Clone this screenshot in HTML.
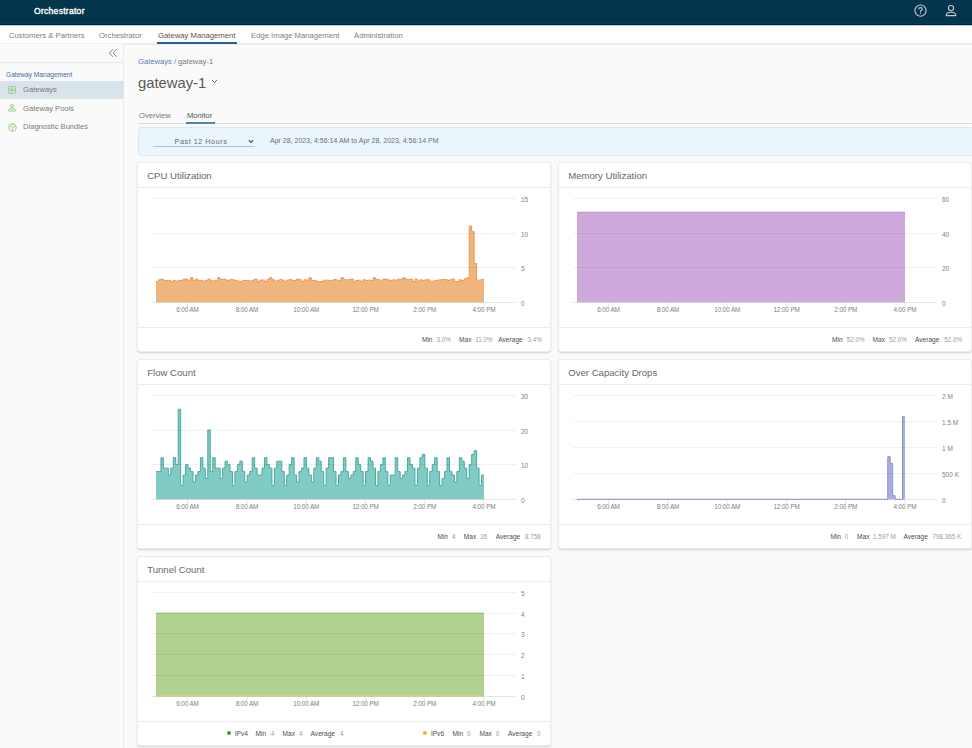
<!DOCTYPE html>
<html><head><meta charset="utf-8"><style>
*{margin:0;padding:0;box-sizing:border-box}
html,body{width:972px;height:748px;overflow:hidden;background:#fafafa;font-family:"Liberation Sans",sans-serif;color:#565656}
.hdr{position:absolute;left:0;top:0;width:972px;height:25px;background:#03364d;border-bottom:1px solid #01223a;box-shadow:inset 0 -1px 0 #0a3b52}
.brand{position:absolute;left:34px;top:6.2px;font-size:8.6px;font-weight:normal;color:#fff;letter-spacing:0.25px;-webkit-text-stroke:0.35px #fff}
.nav{position:absolute;left:0;top:25px;width:972px;height:19px;background:#fff}
.navb1{position:absolute;left:0;top:43px;width:972px;height:1px;background:#eeeeee}
.navb2{position:absolute;left:0;top:44px;width:972px;height:1px;background:#e9e9e9}
.nav span{position:absolute;top:5.8px;font-size:7.7px;color:#7e7e7e;white-space:nowrap}
.nav .act{color:#555}
.nav .ul{position:absolute;left:157px;top:17.3px;width:80px;height:1.8px;background:#1d62a5}
.side{position:absolute;left:0;top:44px;width:124px;height:704px;background:#fafafa;border-right:1px solid #ececec}
.side .sep{position:absolute;left:0;top:18px;width:123px;height:1px;background:#e6e6e6}
.side .lbl{position:absolute;left:6px;top:27px;font-size:6.6px;color:#3f6ea6;white-space:nowrap}
.side .sel{position:absolute;left:0;top:37px;width:124px;height:18px;background:#d8e3ea}
.side .it{position:absolute;left:23px;font-size:7.6px;color:#7a7a7a;white-space:nowrap}
.side svg{position:absolute}
.crumb{position:absolute;left:138px;top:57px;font-size:7.6px;color:#777;white-space:nowrap}
.crumb a{color:#5a7db0;text-decoration:none}
.title{position:absolute;left:138px;top:74.6px;font-size:14.8px;color:#585858;white-space:nowrap}
.tabs{position:absolute;left:138px;top:123px;width:834px;height:1px;background:#dcdcdc}
.tab{position:absolute;top:111px;font-size:7.6px;color:#767676;white-space:nowrap}
.tabul{position:absolute;left:186px;top:122px;width:29px;height:2px;background:#5283b0}
.fbar{position:absolute;left:138px;top:127px;width:836px;height:29px;background:#eaf6fc;border:1px solid #dae9f1;border-radius:3px}
.sel12{position:absolute;left:174.6px;top:137.3px;font-size:7.2px;letter-spacing:0.55px;color:#666;white-space:nowrap}
.selul{position:absolute;left:153px;top:146px;width:102px;height:1px;background:#b4c3cd}
.date{position:absolute;left:270px;top:137px;font-size:7px;color:#6e6e6e;white-space:nowrap}
.card{position:absolute;width:414px;height:190px;background:#fff;border:1px solid #ececec;border-radius:3px;box-shadow:0 1px 1.5px rgba(0,0,0,0.16)}
.card .ct{position:absolute;left:9.2px;top:6.9px;font-size:9.6px;color:#686868;white-space:nowrap}
.card .hd{position:absolute;left:0;top:24px;width:412px;height:1px;background:#ececec}
.card .fd{position:absolute;left:0;top:163.5px;width:412px;height:1px;background:#ececec}
.card svg.ch{position:absolute;left:0;top:0}
.yl{font-family:"Liberation Sans",sans-serif;font-size:6.5px;fill:#808080}
.xl{font-family:"Liberation Sans",sans-serif;font-size:6.4px;letter-spacing:-0.12px;fill:#808080}
.ft{position:absolute;left:0;top:0;width:411px;height:187px;white-space:nowrap}
.ft span{position:absolute;top:171.7px;line-height:9px;white-space:nowrap}
.fl{color:#4e4e4e;font-size:6.6px}
.fv{color:#9c9c9c;font-size:6.3px}
.dot{position:absolute;display:block;width:4px;height:4px;border-radius:50%}

</style></head><body>
<div class="hdr"><div class="brand">Orchestrator</div>
<svg style="position:absolute;left:913px;top:4px" width="15" height="14" viewBox="0 0 15 14"><circle cx="7.5" cy="6.6" r="5.6" fill="none" stroke="#c2cbd2" stroke-width="1.1"/><path d="M5.7 5.2 Q5.8 3.6 7.5 3.6 Q9.3 3.6 9.3 5.1 Q9.3 6.1 8.2 6.6 Q7.5 7 7.5 7.9" fill="none" stroke="#c2cbd2" stroke-width="1.1"/><circle cx="7.5" cy="9.3" r="0.7" fill="#c2cbd2"/></svg>
<svg style="position:absolute;left:944px;top:4px" width="14" height="14" viewBox="0 0 14 14"><circle cx="7" cy="4.1" r="2.6" fill="none" stroke="#c2cbd2" stroke-width="1.1"/><path d="M2.2 11.6 Q2.2 8.3 7 8.3 Q11.8 8.3 11.8 11.6 Z" fill="none" stroke="#c2cbd2" stroke-width="1.1" stroke-linejoin="round"/></svg>
</div>
<div class="nav">
<span style="left:9px">Customers &amp; Partners</span>
<span style="left:99px">Orchestrator</span>
<span class="act" style="left:158px">Gateway Management</span>
<span style="left:251px">Edge Image Management</span>
<span style="left:354px">Administration</span>
</div>
<div class="navb1"></div><div class="navb2"></div>
<div style="position:absolute;left:0;top:25px;width:972px;height:1px;background:#c3cbd0"></div>
<div class="nav-ul" style="position:absolute;left:157px;top:42.3px;width:80px;height:1.8px;background:#1d62a5"></div>
<div class="side">
<svg style="left:108px;top:4px" width="10" height="10" viewBox="0 0 10 10"><path d="M5 1.2 L1.4 5 L5 8.8 M8.8 1.2 L5.2 5 L8.8 8.8" fill="none" stroke="#6a6a6a" stroke-width="0.85"/></svg>
<div class="sep"></div>
<div class="lbl">Gateway Management</div>
<div class="sel"></div>
<svg style="left:8px;top:42px" width="8" height="8" viewBox="0 0 8 8"><rect x="0.4" y="0.4" width="7.2" height="7.2" rx="1" fill="none" stroke="#8fc57e" stroke-width="0.8"/><path d="M0.4 3.2 H4.4 M4.4 0.4 V4.4 H7.6 M3.3 3.2 V7.6" fill="none" stroke="#8fc57e" stroke-width="0.8"/></svg>
<div class="it" style="top:41px">Gateways</div>
<svg style="left:8px;top:60px" width="8" height="8" viewBox="0 0 8 8"><ellipse cx="4" cy="1.7" rx="1.8" ry="1.2" fill="none" stroke="#8fc57e" stroke-width="0.8"/><ellipse cx="2" cy="6.2" rx="1.6" ry="1.3" fill="none" stroke="#8fc57e" stroke-width="0.8"/><ellipse cx="6" cy="6.2" rx="1.6" ry="1.3" fill="none" stroke="#8fc57e" stroke-width="0.8"/><path d="M4 2.9 L2.6 4.9 M4 2.9 L5.4 4.9" fill="none" stroke="#8fc57e" stroke-width="0.8"/></svg>
<div class="it" style="top:60px">Gateway Pools</div>
<svg style="left:7.6px;top:78.6px" width="9" height="9" viewBox="0 0 9 9"><circle cx="4.5" cy="4.5" r="3.8" fill="none" stroke="#8fc57e" stroke-width="0.8"/><path d="M1.2 3 L4.5 4.6 L7.8 3 M4.5 4.6 V8.3 M2.8 2.2 L4.5 1.4 L6.2 2.2" fill="none" stroke="#8fc57e" stroke-width="0.75"/></svg>
<div class="it" style="top:78px">Diagnostic Bundles</div>
</div>
<div class="crumb"><a>Gateways</a> / gateway-1</div>
<div class="title">gateway-1</div>
<svg style="position:absolute;left:211px;top:79px" width="7" height="5" viewBox="0 0 7 5"><path d="M1 1 L3.5 3.5 L6 1" fill="none" stroke="#666" stroke-width="1"/></svg>
<div class="tab" style="left:139px">Overview</div>
<div class="tab" style="left:187px;color:#555">Monitor</div>
<div class="tabs"></div>
<div class="tabul"></div>
<div class="fbar"></div>
<div class="sel12">Past 12 Hours</div>
<svg style="position:absolute;left:248px;top:139px" width="6" height="5" viewBox="0 0 6 5"><path d="M0.8 1.2 L3 3.4 L5.2 1.2" fill="none" stroke="#444" stroke-width="1.1"/></svg>
<div class="selul"></div>
<div class="date">Apr 28, 2023, 4:56:14 AM to Apr 28, 2023, 4:56:14 PM</div>
<div class="card" style="left:137px;top:162px"><div class="ct">CPU Utilization</div><div class="hd"></div><svg class="ch" width="414" height="190" viewBox="0 0 414 190"><path d="M18.00 118.52 L20.47 118.52 L20.47 116.79 L22.93 116.79 L22.93 116.10 L25.40 116.10 L25.40 117.48 L27.86 117.48 L27.86 117.48 L30.33 117.48 L30.33 117.48 L32.80 117.48 L32.80 118.52 L35.26 118.52 L35.26 117.48 L37.73 117.48 L37.73 118.17 L40.20 118.17 L40.20 117.48 L42.66 117.48 L42.66 117.48 L45.13 117.48 L45.13 116.10 L47.59 116.10 L47.59 116.10 L50.06 116.10 L50.06 117.48 L52.53 117.48 L52.53 114.71 L54.99 114.71 L54.99 117.48 L57.46 117.48 L57.46 116.10 L59.92 116.10 L59.92 117.48 L62.39 117.48 L62.39 117.48 L64.86 117.48 L64.86 118.17 L67.32 118.17 L67.32 117.48 L69.79 117.48 L69.79 116.10 L72.26 116.10 L72.26 117.48 L74.72 117.48 L74.72 118.17 L77.19 118.17 L77.19 117.48 L79.65 117.48 L79.65 114.71 L82.12 114.71 L82.12 116.44 L84.59 116.44 L84.59 116.10 L87.05 116.10 L87.05 116.79 L89.52 116.79 L89.52 117.48 L91.98 117.48 L91.98 116.44 L94.45 116.44 L94.45 116.79 L96.92 116.79 L96.92 117.48 L99.38 117.48 L99.38 118.17 L101.85 118.17 L101.85 118.52 L104.32 118.52 L104.32 117.48 L106.78 117.48 L106.78 117.48 L109.25 117.48 L109.25 117.48 L111.71 117.48 L111.71 118.17 L114.18 118.17 L114.18 117.13 L116.65 117.13 L116.65 116.10 L119.11 116.10 L119.11 118.52 L121.58 118.52 L121.58 117.13 L124.05 117.13 L124.05 117.13 L126.51 117.13 L126.51 118.52 L128.98 118.52 L128.98 116.44 L131.44 116.44 L131.44 114.71 L133.91 114.71 L133.91 116.79 L136.38 116.79 L136.38 118.17 L138.84 118.17 L138.84 117.48 L141.31 117.48 L141.31 116.44 L143.77 116.44 L143.77 117.13 L146.24 117.13 L146.24 118.52 L148.71 118.52 L148.71 117.13 L151.17 117.13 L151.17 116.44 L153.64 116.44 L153.64 117.48 L156.11 117.48 L156.11 117.48 L158.57 117.48 L158.57 116.10 L161.04 116.10 L161.04 116.79 L163.50 116.79 L163.50 118.52 L165.97 118.52 L165.97 116.79 L168.44 116.79 L168.44 117.13 L170.90 117.13 L170.90 114.71 L173.37 114.71 L173.37 117.48 L175.83 117.48 L175.83 117.48 L178.30 117.48 L178.30 118.52 L180.77 118.52 L180.77 118.52 L183.23 118.52 L183.23 118.52 L185.70 118.52 L185.70 117.13 L188.17 117.13 L188.17 117.13 L190.63 117.13 L190.63 117.48 L193.10 117.48 L193.10 117.48 L195.56 117.48 L195.56 116.44 L198.03 116.44 L198.03 117.13 L200.50 117.13 L200.50 117.48 L202.96 117.48 L202.96 114.71 L205.43 114.71 L205.43 116.44 L207.89 116.44 L207.89 117.13 L210.36 117.13 L210.36 116.44 L212.83 116.44 L212.83 116.10 L215.29 116.10 L215.29 118.52 L217.76 118.52 L217.76 117.48 L220.23 117.48 L220.23 117.13 L222.69 117.13 L222.69 118.52 L225.16 118.52 L225.16 116.79 L227.62 116.79 L227.62 117.48 L230.09 117.48 L230.09 117.13 L232.56 117.13 L232.56 117.48 L235.02 117.48 L235.02 114.71 L237.49 114.71 L237.49 116.44 L239.95 116.44 L239.95 116.79 L242.42 116.79 L242.42 118.17 L244.89 118.17 L244.89 116.10 L247.35 116.10 L247.35 116.10 L249.82 116.10 L249.82 117.13 L252.29 117.13 L252.29 117.48 L254.75 117.48 L254.75 116.79 L257.22 116.79 L257.22 117.13 L259.68 117.13 L259.68 116.10 L262.15 116.10 L262.15 116.44 L264.62 116.44 L264.62 114.71 L267.08 114.71 L267.08 116.10 L269.55 116.10 L269.55 116.44 L272.02 116.44 L272.02 116.10 L274.48 116.10 L274.48 118.52 L276.95 118.52 L276.95 116.10 L279.41 116.10 L279.41 118.17 L281.88 118.17 L281.88 116.79 L284.35 116.79 L284.35 117.48 L286.81 117.48 L286.81 116.79 L289.28 116.79 L289.28 116.79 L291.74 116.79 L291.74 118.17 L294.21 118.17 L294.21 118.17 L296.68 118.17 L296.68 117.48 L299.14 117.48 L299.14 117.13 L301.61 117.13 L301.61 116.79 L304.08 116.79 L304.08 116.44 L306.54 116.44 L306.54 116.44 L309.01 116.44 L309.01 117.48 L311.47 117.48 L311.47 116.79 L313.94 116.79 L313.94 116.10 L316.41 116.10 L316.41 118.52 L318.87 118.52 L318.87 118.52 L321.34 118.52 L321.34 116.79 L323.80 116.79 L323.80 117.48 L326.27 117.48 L326.27 115.75 L328.74 115.75 L328.74 114.71 L331.20 114.71 L331.20 63.11 L333.67 63.11 L333.67 68.65 L336.14 68.65 L336.14 100.51 L338.60 100.51 L338.60 117.13 L341.07 117.13 L341.07 117.13 L343.53 117.13 L343.53 116.44 L346.00 116.44 L346.00 139.30 L18.00 139.30 Z" fill="#f0b47e" stroke="none"/><path d="M18.00 118.52 L20.47 118.52 L20.47 116.79 L22.93 116.79 L22.93 116.10 L25.40 116.10 L25.40 117.48 L27.86 117.48 L27.86 117.48 L30.33 117.48 L30.33 117.48 L32.80 117.48 L32.80 118.52 L35.26 118.52 L35.26 117.48 L37.73 117.48 L37.73 118.17 L40.20 118.17 L40.20 117.48 L42.66 117.48 L42.66 117.48 L45.13 117.48 L45.13 116.10 L47.59 116.10 L47.59 116.10 L50.06 116.10 L50.06 117.48 L52.53 117.48 L52.53 114.71 L54.99 114.71 L54.99 117.48 L57.46 117.48 L57.46 116.10 L59.92 116.10 L59.92 117.48 L62.39 117.48 L62.39 117.48 L64.86 117.48 L64.86 118.17 L67.32 118.17 L67.32 117.48 L69.79 117.48 L69.79 116.10 L72.26 116.10 L72.26 117.48 L74.72 117.48 L74.72 118.17 L77.19 118.17 L77.19 117.48 L79.65 117.48 L79.65 114.71 L82.12 114.71 L82.12 116.44 L84.59 116.44 L84.59 116.10 L87.05 116.10 L87.05 116.79 L89.52 116.79 L89.52 117.48 L91.98 117.48 L91.98 116.44 L94.45 116.44 L94.45 116.79 L96.92 116.79 L96.92 117.48 L99.38 117.48 L99.38 118.17 L101.85 118.17 L101.85 118.52 L104.32 118.52 L104.32 117.48 L106.78 117.48 L106.78 117.48 L109.25 117.48 L109.25 117.48 L111.71 117.48 L111.71 118.17 L114.18 118.17 L114.18 117.13 L116.65 117.13 L116.65 116.10 L119.11 116.10 L119.11 118.52 L121.58 118.52 L121.58 117.13 L124.05 117.13 L124.05 117.13 L126.51 117.13 L126.51 118.52 L128.98 118.52 L128.98 116.44 L131.44 116.44 L131.44 114.71 L133.91 114.71 L133.91 116.79 L136.38 116.79 L136.38 118.17 L138.84 118.17 L138.84 117.48 L141.31 117.48 L141.31 116.44 L143.77 116.44 L143.77 117.13 L146.24 117.13 L146.24 118.52 L148.71 118.52 L148.71 117.13 L151.17 117.13 L151.17 116.44 L153.64 116.44 L153.64 117.48 L156.11 117.48 L156.11 117.48 L158.57 117.48 L158.57 116.10 L161.04 116.10 L161.04 116.79 L163.50 116.79 L163.50 118.52 L165.97 118.52 L165.97 116.79 L168.44 116.79 L168.44 117.13 L170.90 117.13 L170.90 114.71 L173.37 114.71 L173.37 117.48 L175.83 117.48 L175.83 117.48 L178.30 117.48 L178.30 118.52 L180.77 118.52 L180.77 118.52 L183.23 118.52 L183.23 118.52 L185.70 118.52 L185.70 117.13 L188.17 117.13 L188.17 117.13 L190.63 117.13 L190.63 117.48 L193.10 117.48 L193.10 117.48 L195.56 117.48 L195.56 116.44 L198.03 116.44 L198.03 117.13 L200.50 117.13 L200.50 117.48 L202.96 117.48 L202.96 114.71 L205.43 114.71 L205.43 116.44 L207.89 116.44 L207.89 117.13 L210.36 117.13 L210.36 116.44 L212.83 116.44 L212.83 116.10 L215.29 116.10 L215.29 118.52 L217.76 118.52 L217.76 117.48 L220.23 117.48 L220.23 117.13 L222.69 117.13 L222.69 118.52 L225.16 118.52 L225.16 116.79 L227.62 116.79 L227.62 117.48 L230.09 117.48 L230.09 117.13 L232.56 117.13 L232.56 117.48 L235.02 117.48 L235.02 114.71 L237.49 114.71 L237.49 116.44 L239.95 116.44 L239.95 116.79 L242.42 116.79 L242.42 118.17 L244.89 118.17 L244.89 116.10 L247.35 116.10 L247.35 116.10 L249.82 116.10 L249.82 117.13 L252.29 117.13 L252.29 117.48 L254.75 117.48 L254.75 116.79 L257.22 116.79 L257.22 117.13 L259.68 117.13 L259.68 116.10 L262.15 116.10 L262.15 116.44 L264.62 116.44 L264.62 114.71 L267.08 114.71 L267.08 116.10 L269.55 116.10 L269.55 116.44 L272.02 116.44 L272.02 116.10 L274.48 116.10 L274.48 118.52 L276.95 118.52 L276.95 116.10 L279.41 116.10 L279.41 118.17 L281.88 118.17 L281.88 116.79 L284.35 116.79 L284.35 117.48 L286.81 117.48 L286.81 116.79 L289.28 116.79 L289.28 116.79 L291.74 116.79 L291.74 118.17 L294.21 118.17 L294.21 118.17 L296.68 118.17 L296.68 117.48 L299.14 117.48 L299.14 117.13 L301.61 117.13 L301.61 116.79 L304.08 116.79 L304.08 116.44 L306.54 116.44 L306.54 116.44 L309.01 116.44 L309.01 117.48 L311.47 117.48 L311.47 116.79 L313.94 116.79 L313.94 116.10 L316.41 116.10 L316.41 118.52 L318.87 118.52 L318.87 118.52 L321.34 118.52 L321.34 116.79 L323.80 116.79 L323.80 117.48 L326.27 117.48 L326.27 115.75 L328.74 115.75 L328.74 114.71 L331.20 114.71 L331.20 63.11 L333.67 63.11 L333.67 68.65 L336.14 68.65 L336.14 100.51 L338.60 100.51 L338.60 117.13 L341.07 117.13 L341.07 117.13 L343.53 117.13 L343.53 116.44 L346.00 116.44" fill="none" stroke="#e9995a" stroke-width="1"/><line x1="14.0" y1="139.50" x2="378.0" y2="139.50" stroke="rgba(0,0,0,0.1)" stroke-width="1"/><text x="383" y="142.50" class="yl">0</text><line x1="14.0" y1="104.50" x2="378.0" y2="104.50" stroke="rgba(0,0,0,0.055)" stroke-width="1"/><text x="383" y="107.50" class="yl">5</text><line x1="14.0" y1="70.50" x2="378.0" y2="70.50" stroke="rgba(0,0,0,0.055)" stroke-width="1"/><text x="383" y="73.50" class="yl">10</text><line x1="14.0" y1="35.50" x2="378.0" y2="35.50" stroke="rgba(0,0,0,0.055)" stroke-width="1"/><text x="383" y="38.50" class="yl">15</text><line x1="49.5" y1="140.0" x2="49.5" y2="144.0" stroke="#dfe6f3" stroke-width="1"/><text x="49.5" y="148.9" class="xl" text-anchor="middle">6:00 AM</text><line x1="109.0" y1="140.0" x2="109.0" y2="144.0" stroke="#dfe6f3" stroke-width="1"/><text x="109.0" y="148.9" class="xl" text-anchor="middle">8:00 AM</text><line x1="168.3" y1="140.0" x2="168.3" y2="144.0" stroke="#dfe6f3" stroke-width="1"/><text x="168.3" y="148.9" class="xl" text-anchor="middle">10:00 AM</text><line x1="227.6" y1="140.0" x2="227.6" y2="144.0" stroke="#dfe6f3" stroke-width="1"/><text x="227.6" y="148.9" class="xl" text-anchor="middle">12:00 PM</text><line x1="286.8" y1="140.0" x2="286.8" y2="144.0" stroke="#dfe6f3" stroke-width="1"/><text x="286.8" y="148.9" class="xl" text-anchor="middle">2:00 PM</text><line x1="346.0" y1="140.0" x2="346.0" y2="144.0" stroke="#dfe6f3" stroke-width="1"/><text x="346.0" y="148.9" class="xl" text-anchor="middle">4:00 PM</text></svg><div class="fd"></div><div class="ft"><span class="fl" style="left:283.9px">Min</span><span class="fv" style="left:298.6px">3.0%</span><span class="fl" style="left:321.0px">Max</span><span class="fv" style="left:337.2px">11.0%</span><span class="fl" style="left:360.3px">Average</span><span class="fv" style="left:389.6px">3.4%</span></div></div>
<div class="card" style="left:558px;top:162px"><div class="ct">Memory Utilization</div><div class="hd"></div><svg class="ch" width="414" height="190" viewBox="0 0 414 190"><path d="M18.00 49.25 L20.47 49.25 L20.47 49.25 L22.93 49.25 L22.93 49.25 L25.40 49.25 L25.40 49.25 L27.86 49.25 L27.86 49.25 L30.33 49.25 L30.33 49.25 L32.80 49.25 L32.80 49.25 L35.26 49.25 L35.26 49.25 L37.73 49.25 L37.73 49.25 L40.20 49.25 L40.20 49.25 L42.66 49.25 L42.66 49.25 L45.13 49.25 L45.13 49.25 L47.59 49.25 L47.59 49.25 L50.06 49.25 L50.06 49.25 L52.53 49.25 L52.53 49.25 L54.99 49.25 L54.99 49.25 L57.46 49.25 L57.46 49.25 L59.92 49.25 L59.92 49.25 L62.39 49.25 L62.39 49.25 L64.86 49.25 L64.86 49.25 L67.32 49.25 L67.32 49.25 L69.79 49.25 L69.79 49.25 L72.26 49.25 L72.26 49.25 L74.72 49.25 L74.72 49.25 L77.19 49.25 L77.19 49.25 L79.65 49.25 L79.65 49.25 L82.12 49.25 L82.12 49.25 L84.59 49.25 L84.59 49.25 L87.05 49.25 L87.05 49.25 L89.52 49.25 L89.52 49.25 L91.98 49.25 L91.98 49.25 L94.45 49.25 L94.45 49.25 L96.92 49.25 L96.92 49.25 L99.38 49.25 L99.38 49.25 L101.85 49.25 L101.85 49.25 L104.32 49.25 L104.32 49.25 L106.78 49.25 L106.78 49.25 L109.25 49.25 L109.25 49.25 L111.71 49.25 L111.71 49.25 L114.18 49.25 L114.18 49.25 L116.65 49.25 L116.65 49.25 L119.11 49.25 L119.11 49.25 L121.58 49.25 L121.58 49.25 L124.05 49.25 L124.05 49.25 L126.51 49.25 L126.51 49.25 L128.98 49.25 L128.98 49.25 L131.44 49.25 L131.44 49.25 L133.91 49.25 L133.91 49.25 L136.38 49.25 L136.38 49.25 L138.84 49.25 L138.84 49.25 L141.31 49.25 L141.31 49.25 L143.77 49.25 L143.77 49.25 L146.24 49.25 L146.24 49.25 L148.71 49.25 L148.71 49.25 L151.17 49.25 L151.17 49.25 L153.64 49.25 L153.64 49.25 L156.11 49.25 L156.11 49.25 L158.57 49.25 L158.57 49.25 L161.04 49.25 L161.04 49.25 L163.50 49.25 L163.50 49.25 L165.97 49.25 L165.97 49.25 L168.44 49.25 L168.44 49.25 L170.90 49.25 L170.90 49.25 L173.37 49.25 L173.37 49.25 L175.83 49.25 L175.83 49.25 L178.30 49.25 L178.30 49.25 L180.77 49.25 L180.77 49.25 L183.23 49.25 L183.23 49.25 L185.70 49.25 L185.70 49.25 L188.17 49.25 L188.17 49.25 L190.63 49.25 L190.63 49.25 L193.10 49.25 L193.10 49.25 L195.56 49.25 L195.56 49.25 L198.03 49.25 L198.03 49.25 L200.50 49.25 L200.50 49.25 L202.96 49.25 L202.96 49.25 L205.43 49.25 L205.43 49.25 L207.89 49.25 L207.89 49.25 L210.36 49.25 L210.36 49.25 L212.83 49.25 L212.83 49.25 L215.29 49.25 L215.29 49.25 L217.76 49.25 L217.76 49.25 L220.23 49.25 L220.23 49.25 L222.69 49.25 L222.69 49.25 L225.16 49.25 L225.16 49.25 L227.62 49.25 L227.62 49.25 L230.09 49.25 L230.09 49.25 L232.56 49.25 L232.56 49.25 L235.02 49.25 L235.02 49.25 L237.49 49.25 L237.49 49.25 L239.95 49.25 L239.95 49.25 L242.42 49.25 L242.42 49.25 L244.89 49.25 L244.89 49.25 L247.35 49.25 L247.35 49.25 L249.82 49.25 L249.82 49.25 L252.29 49.25 L252.29 49.25 L254.75 49.25 L254.75 49.25 L257.22 49.25 L257.22 49.25 L259.68 49.25 L259.68 49.25 L262.15 49.25 L262.15 49.25 L264.62 49.25 L264.62 49.25 L267.08 49.25 L267.08 49.25 L269.55 49.25 L269.55 49.25 L272.02 49.25 L272.02 49.25 L274.48 49.25 L274.48 49.25 L276.95 49.25 L276.95 49.25 L279.41 49.25 L279.41 49.25 L281.88 49.25 L281.88 49.25 L284.35 49.25 L284.35 49.25 L286.81 49.25 L286.81 49.25 L289.28 49.25 L289.28 49.25 L291.74 49.25 L291.74 49.25 L294.21 49.25 L294.21 49.25 L296.68 49.25 L296.68 49.25 L299.14 49.25 L299.14 49.25 L301.61 49.25 L301.61 49.25 L304.08 49.25 L304.08 49.25 L306.54 49.25 L306.54 49.25 L309.01 49.25 L309.01 49.25 L311.47 49.25 L311.47 49.25 L313.94 49.25 L313.94 49.25 L316.41 49.25 L316.41 49.25 L318.87 49.25 L318.87 49.25 L321.34 49.25 L321.34 49.25 L323.80 49.25 L323.80 49.25 L326.27 49.25 L326.27 49.25 L328.74 49.25 L328.74 49.25 L331.20 49.25 L331.20 49.25 L333.67 49.25 L333.67 49.25 L336.14 49.25 L336.14 49.25 L338.60 49.25 L338.60 49.25 L341.07 49.25 L341.07 49.25 L343.53 49.25 L343.53 49.25 L346.00 49.25 L346.00 139.30 L18.00 139.30 Z" fill="#cea9dd" stroke="none"/><path d="M18.00 49.25 L20.47 49.25 L20.47 49.25 L22.93 49.25 L22.93 49.25 L25.40 49.25 L25.40 49.25 L27.86 49.25 L27.86 49.25 L30.33 49.25 L30.33 49.25 L32.80 49.25 L32.80 49.25 L35.26 49.25 L35.26 49.25 L37.73 49.25 L37.73 49.25 L40.20 49.25 L40.20 49.25 L42.66 49.25 L42.66 49.25 L45.13 49.25 L45.13 49.25 L47.59 49.25 L47.59 49.25 L50.06 49.25 L50.06 49.25 L52.53 49.25 L52.53 49.25 L54.99 49.25 L54.99 49.25 L57.46 49.25 L57.46 49.25 L59.92 49.25 L59.92 49.25 L62.39 49.25 L62.39 49.25 L64.86 49.25 L64.86 49.25 L67.32 49.25 L67.32 49.25 L69.79 49.25 L69.79 49.25 L72.26 49.25 L72.26 49.25 L74.72 49.25 L74.72 49.25 L77.19 49.25 L77.19 49.25 L79.65 49.25 L79.65 49.25 L82.12 49.25 L82.12 49.25 L84.59 49.25 L84.59 49.25 L87.05 49.25 L87.05 49.25 L89.52 49.25 L89.52 49.25 L91.98 49.25 L91.98 49.25 L94.45 49.25 L94.45 49.25 L96.92 49.25 L96.92 49.25 L99.38 49.25 L99.38 49.25 L101.85 49.25 L101.85 49.25 L104.32 49.25 L104.32 49.25 L106.78 49.25 L106.78 49.25 L109.25 49.25 L109.25 49.25 L111.71 49.25 L111.71 49.25 L114.18 49.25 L114.18 49.25 L116.65 49.25 L116.65 49.25 L119.11 49.25 L119.11 49.25 L121.58 49.25 L121.58 49.25 L124.05 49.25 L124.05 49.25 L126.51 49.25 L126.51 49.25 L128.98 49.25 L128.98 49.25 L131.44 49.25 L131.44 49.25 L133.91 49.25 L133.91 49.25 L136.38 49.25 L136.38 49.25 L138.84 49.25 L138.84 49.25 L141.31 49.25 L141.31 49.25 L143.77 49.25 L143.77 49.25 L146.24 49.25 L146.24 49.25 L148.71 49.25 L148.71 49.25 L151.17 49.25 L151.17 49.25 L153.64 49.25 L153.64 49.25 L156.11 49.25 L156.11 49.25 L158.57 49.25 L158.57 49.25 L161.04 49.25 L161.04 49.25 L163.50 49.25 L163.50 49.25 L165.97 49.25 L165.97 49.25 L168.44 49.25 L168.44 49.25 L170.90 49.25 L170.90 49.25 L173.37 49.25 L173.37 49.25 L175.83 49.25 L175.83 49.25 L178.30 49.25 L178.30 49.25 L180.77 49.25 L180.77 49.25 L183.23 49.25 L183.23 49.25 L185.70 49.25 L185.70 49.25 L188.17 49.25 L188.17 49.25 L190.63 49.25 L190.63 49.25 L193.10 49.25 L193.10 49.25 L195.56 49.25 L195.56 49.25 L198.03 49.25 L198.03 49.25 L200.50 49.25 L200.50 49.25 L202.96 49.25 L202.96 49.25 L205.43 49.25 L205.43 49.25 L207.89 49.25 L207.89 49.25 L210.36 49.25 L210.36 49.25 L212.83 49.25 L212.83 49.25 L215.29 49.25 L215.29 49.25 L217.76 49.25 L217.76 49.25 L220.23 49.25 L220.23 49.25 L222.69 49.25 L222.69 49.25 L225.16 49.25 L225.16 49.25 L227.62 49.25 L227.62 49.25 L230.09 49.25 L230.09 49.25 L232.56 49.25 L232.56 49.25 L235.02 49.25 L235.02 49.25 L237.49 49.25 L237.49 49.25 L239.95 49.25 L239.95 49.25 L242.42 49.25 L242.42 49.25 L244.89 49.25 L244.89 49.25 L247.35 49.25 L247.35 49.25 L249.82 49.25 L249.82 49.25 L252.29 49.25 L252.29 49.25 L254.75 49.25 L254.75 49.25 L257.22 49.25 L257.22 49.25 L259.68 49.25 L259.68 49.25 L262.15 49.25 L262.15 49.25 L264.62 49.25 L264.62 49.25 L267.08 49.25 L267.08 49.25 L269.55 49.25 L269.55 49.25 L272.02 49.25 L272.02 49.25 L274.48 49.25 L274.48 49.25 L276.95 49.25 L276.95 49.25 L279.41 49.25 L279.41 49.25 L281.88 49.25 L281.88 49.25 L284.35 49.25 L284.35 49.25 L286.81 49.25 L286.81 49.25 L289.28 49.25 L289.28 49.25 L291.74 49.25 L291.74 49.25 L294.21 49.25 L294.21 49.25 L296.68 49.25 L296.68 49.25 L299.14 49.25 L299.14 49.25 L301.61 49.25 L301.61 49.25 L304.08 49.25 L304.08 49.25 L306.54 49.25 L306.54 49.25 L309.01 49.25 L309.01 49.25 L311.47 49.25 L311.47 49.25 L313.94 49.25 L313.94 49.25 L316.41 49.25 L316.41 49.25 L318.87 49.25 L318.87 49.25 L321.34 49.25 L321.34 49.25 L323.80 49.25 L323.80 49.25 L326.27 49.25 L326.27 49.25 L328.74 49.25 L328.74 49.25 L331.20 49.25 L331.20 49.25 L333.67 49.25 L333.67 49.25 L336.14 49.25 L336.14 49.25 L338.60 49.25 L338.60 49.25 L341.07 49.25 L341.07 49.25 L343.53 49.25 L343.53 49.25 L346.00 49.25" fill="none" stroke="#b98bce" stroke-width="1"/><line x1="14.0" y1="139.50" x2="378.0" y2="139.50" stroke="rgba(0,0,0,0.1)" stroke-width="1"/><text x="383" y="142.50" class="yl">0</text><line x1="14.0" y1="104.50" x2="378.0" y2="104.50" stroke="rgba(0,0,0,0.055)" stroke-width="1"/><text x="383" y="107.50" class="yl">20</text><line x1="14.0" y1="70.50" x2="378.0" y2="70.50" stroke="rgba(0,0,0,0.055)" stroke-width="1"/><text x="383" y="73.50" class="yl">40</text><line x1="14.0" y1="35.50" x2="378.0" y2="35.50" stroke="rgba(0,0,0,0.055)" stroke-width="1"/><text x="383" y="38.50" class="yl">60</text><line x1="49.5" y1="140.0" x2="49.5" y2="144.0" stroke="#dfe6f3" stroke-width="1"/><text x="49.5" y="148.9" class="xl" text-anchor="middle">6:00 AM</text><line x1="109.0" y1="140.0" x2="109.0" y2="144.0" stroke="#dfe6f3" stroke-width="1"/><text x="109.0" y="148.9" class="xl" text-anchor="middle">8:00 AM</text><line x1="168.3" y1="140.0" x2="168.3" y2="144.0" stroke="#dfe6f3" stroke-width="1"/><text x="168.3" y="148.9" class="xl" text-anchor="middle">10:00 AM</text><line x1="227.6" y1="140.0" x2="227.6" y2="144.0" stroke="#dfe6f3" stroke-width="1"/><text x="227.6" y="148.9" class="xl" text-anchor="middle">12:00 PM</text><line x1="286.8" y1="140.0" x2="286.8" y2="144.0" stroke="#dfe6f3" stroke-width="1"/><text x="286.8" y="148.9" class="xl" text-anchor="middle">2:00 PM</text><line x1="346.0" y1="140.0" x2="346.0" y2="144.0" stroke="#dfe6f3" stroke-width="1"/><text x="346.0" y="148.9" class="xl" text-anchor="middle">4:00 PM</text></svg><div class="fd"></div><div class="ft"><span class="fl" style="left:273.1px">Min</span><span class="fv" style="left:287.8px">52.0%</span><span class="fl" style="left:313.5px">Max</span><span class="fv" style="left:330.0px">52.0%</span><span class="fl" style="left:356.0px">Average</span><span class="fv" style="left:385.3px">52.0%</span></div></div>
<div class="card" style="left:137px;top:359px"><div class="ct">Flow Count</div><div class="hd"></div><svg class="ch" width="414" height="190" viewBox="0 0 414 190"><path d="M18.00 111.59 L20.47 111.59 L20.47 111.59 L22.93 111.59 L22.93 97.74 L25.40 97.74 L25.40 108.13 L27.86 108.13 L27.86 108.13 L30.33 108.13 L30.33 115.06 L32.80 115.06 L32.80 108.13 L35.26 108.13 L35.26 97.74 L37.73 97.74 L37.73 104.67 L40.20 104.67 L40.20 49.25 L42.66 49.25 L42.66 125.45 L45.13 125.45 L45.13 115.06 L47.59 115.06 L47.59 104.67 L50.06 104.67 L50.06 108.13 L52.53 108.13 L52.53 111.59 L54.99 111.59 L54.99 121.98 L57.46 121.98 L57.46 115.06 L59.92 115.06 L59.92 111.59 L62.39 111.59 L62.39 97.74 L64.86 97.74 L64.86 108.13 L67.32 108.13 L67.32 118.52 L69.79 118.52 L69.79 70.03 L72.26 70.03 L72.26 111.59 L74.72 111.59 L74.72 97.74 L77.19 97.74 L77.19 108.13 L79.65 108.13 L79.65 108.13 L82.12 108.13 L82.12 118.52 L84.59 118.52 L84.59 108.13 L87.05 108.13 L87.05 101.20 L89.52 101.20 L89.52 104.67 L91.98 104.67 L91.98 111.59 L94.45 111.59 L94.45 125.45 L96.92 125.45 L96.92 111.59 L99.38 111.59 L99.38 104.67 L101.85 104.67 L101.85 101.20 L104.32 101.20 L104.32 111.59 L106.78 111.59 L106.78 121.98 L109.25 121.98 L109.25 115.06 L111.71 115.06 L111.71 111.59 L114.18 111.59 L114.18 97.74 L116.65 97.74 L116.65 108.13 L119.11 108.13 L119.11 115.06 L121.58 115.06 L121.58 115.06 L124.05 115.06 L124.05 108.13 L126.51 108.13 L126.51 97.74 L128.98 97.74 L128.98 104.67 L131.44 104.67 L131.44 108.13 L133.91 108.13 L133.91 125.45 L136.38 125.45 L136.38 108.13 L138.84 108.13 L138.84 101.20 L141.31 101.20 L141.31 101.20 L143.77 101.20 L143.77 111.59 L146.24 111.59 L146.24 125.45 L148.71 125.45 L148.71 115.06 L151.17 115.06 L151.17 104.67 L153.64 104.67 L153.64 97.74 L156.11 97.74 L156.11 115.06 L158.57 115.06 L158.57 121.98 L161.04 121.98 L161.04 111.59 L163.50 111.59 L163.50 108.13 L165.97 108.13 L165.97 97.74 L168.44 97.74 L168.44 108.13 L170.90 108.13 L170.90 115.06 L173.37 115.06 L173.37 121.98 L175.83 121.98 L175.83 108.13 L178.30 108.13 L178.30 97.74 L180.77 97.74 L180.77 101.20 L183.23 101.20 L183.23 111.59 L185.70 111.59 L185.70 125.45 L188.17 125.45 L188.17 108.13 L190.63 108.13 L190.63 97.74 L193.10 97.74 L193.10 97.74 L195.56 97.74 L195.56 111.59 L198.03 111.59 L198.03 125.45 L200.50 125.45 L200.50 115.06 L202.96 115.06 L202.96 111.59 L205.43 111.59 L205.43 97.74 L207.89 97.74 L207.89 111.59 L210.36 111.59 L210.36 118.52 L212.83 118.52 L212.83 115.06 L215.29 115.06 L215.29 111.59 L217.76 111.59 L217.76 97.74 L220.23 97.74 L220.23 104.67 L222.69 104.67 L222.69 111.59 L225.16 111.59 L225.16 125.45 L227.62 125.45 L227.62 111.59 L230.09 111.59 L230.09 97.74 L232.56 97.74 L232.56 101.20 L235.02 101.20 L235.02 108.13 L237.49 108.13 L237.49 125.45 L239.95 125.45 L239.95 111.59 L242.42 111.59 L242.42 104.67 L244.89 104.67 L244.89 97.74 L247.35 97.74 L247.35 111.59 L249.82 111.59 L249.82 125.45 L252.29 125.45 L252.29 115.06 L254.75 115.06 L254.75 115.06 L257.22 115.06 L257.22 97.74 L259.68 97.74 L259.68 111.59 L262.15 111.59 L262.15 118.52 L264.62 118.52 L264.62 115.06 L267.08 115.06 L267.08 111.59 L269.55 111.59 L269.55 97.74 L272.02 97.74 L272.02 104.67 L274.48 104.67 L274.48 108.13 L276.95 108.13 L276.95 125.45 L279.41 125.45 L279.41 108.13 L281.88 108.13 L281.88 97.74 L284.35 97.74 L284.35 94.28 L286.81 94.28 L286.81 108.13 L289.28 108.13 L289.28 125.45 L291.74 125.45 L291.74 111.59 L294.21 111.59 L294.21 104.67 L296.68 104.67 L296.68 97.74 L299.14 97.74 L299.14 111.59 L301.61 111.59 L301.61 125.45 L304.08 125.45 L304.08 118.52 L306.54 118.52 L306.54 111.59 L309.01 111.59 L309.01 97.74 L311.47 97.74 L311.47 111.59 L313.94 111.59 L313.94 115.06 L316.41 115.06 L316.41 121.98 L318.87 121.98 L318.87 111.59 L321.34 111.59 L321.34 97.74 L323.80 97.74 L323.80 101.20 L326.27 101.20 L326.27 108.13 L328.74 108.13 L328.74 118.52 L331.20 118.52 L331.20 104.67 L333.67 104.67 L333.67 94.28 L336.14 94.28 L336.14 90.81 L338.60 90.81 L338.60 108.13 L341.07 108.13 L341.07 125.45 L343.53 125.45 L343.53 115.06 L346.00 115.06 L346.00 139.30 L18.00 139.30 Z" fill="#80cbc4" stroke="none"/><path d="M18.00 111.59 L20.47 111.59 L20.47 111.59 L22.93 111.59 L22.93 97.74 L25.40 97.74 L25.40 108.13 L27.86 108.13 L27.86 108.13 L30.33 108.13 L30.33 115.06 L32.80 115.06 L32.80 108.13 L35.26 108.13 L35.26 97.74 L37.73 97.74 L37.73 104.67 L40.20 104.67 L40.20 49.25 L42.66 49.25 L42.66 125.45 L45.13 125.45 L45.13 115.06 L47.59 115.06 L47.59 104.67 L50.06 104.67 L50.06 108.13 L52.53 108.13 L52.53 111.59 L54.99 111.59 L54.99 121.98 L57.46 121.98 L57.46 115.06 L59.92 115.06 L59.92 111.59 L62.39 111.59 L62.39 97.74 L64.86 97.74 L64.86 108.13 L67.32 108.13 L67.32 118.52 L69.79 118.52 L69.79 70.03 L72.26 70.03 L72.26 111.59 L74.72 111.59 L74.72 97.74 L77.19 97.74 L77.19 108.13 L79.65 108.13 L79.65 108.13 L82.12 108.13 L82.12 118.52 L84.59 118.52 L84.59 108.13 L87.05 108.13 L87.05 101.20 L89.52 101.20 L89.52 104.67 L91.98 104.67 L91.98 111.59 L94.45 111.59 L94.45 125.45 L96.92 125.45 L96.92 111.59 L99.38 111.59 L99.38 104.67 L101.85 104.67 L101.85 101.20 L104.32 101.20 L104.32 111.59 L106.78 111.59 L106.78 121.98 L109.25 121.98 L109.25 115.06 L111.71 115.06 L111.71 111.59 L114.18 111.59 L114.18 97.74 L116.65 97.74 L116.65 108.13 L119.11 108.13 L119.11 115.06 L121.58 115.06 L121.58 115.06 L124.05 115.06 L124.05 108.13 L126.51 108.13 L126.51 97.74 L128.98 97.74 L128.98 104.67 L131.44 104.67 L131.44 108.13 L133.91 108.13 L133.91 125.45 L136.38 125.45 L136.38 108.13 L138.84 108.13 L138.84 101.20 L141.31 101.20 L141.31 101.20 L143.77 101.20 L143.77 111.59 L146.24 111.59 L146.24 125.45 L148.71 125.45 L148.71 115.06 L151.17 115.06 L151.17 104.67 L153.64 104.67 L153.64 97.74 L156.11 97.74 L156.11 115.06 L158.57 115.06 L158.57 121.98 L161.04 121.98 L161.04 111.59 L163.50 111.59 L163.50 108.13 L165.97 108.13 L165.97 97.74 L168.44 97.74 L168.44 108.13 L170.90 108.13 L170.90 115.06 L173.37 115.06 L173.37 121.98 L175.83 121.98 L175.83 108.13 L178.30 108.13 L178.30 97.74 L180.77 97.74 L180.77 101.20 L183.23 101.20 L183.23 111.59 L185.70 111.59 L185.70 125.45 L188.17 125.45 L188.17 108.13 L190.63 108.13 L190.63 97.74 L193.10 97.74 L193.10 97.74 L195.56 97.74 L195.56 111.59 L198.03 111.59 L198.03 125.45 L200.50 125.45 L200.50 115.06 L202.96 115.06 L202.96 111.59 L205.43 111.59 L205.43 97.74 L207.89 97.74 L207.89 111.59 L210.36 111.59 L210.36 118.52 L212.83 118.52 L212.83 115.06 L215.29 115.06 L215.29 111.59 L217.76 111.59 L217.76 97.74 L220.23 97.74 L220.23 104.67 L222.69 104.67 L222.69 111.59 L225.16 111.59 L225.16 125.45 L227.62 125.45 L227.62 111.59 L230.09 111.59 L230.09 97.74 L232.56 97.74 L232.56 101.20 L235.02 101.20 L235.02 108.13 L237.49 108.13 L237.49 125.45 L239.95 125.45 L239.95 111.59 L242.42 111.59 L242.42 104.67 L244.89 104.67 L244.89 97.74 L247.35 97.74 L247.35 111.59 L249.82 111.59 L249.82 125.45 L252.29 125.45 L252.29 115.06 L254.75 115.06 L254.75 115.06 L257.22 115.06 L257.22 97.74 L259.68 97.74 L259.68 111.59 L262.15 111.59 L262.15 118.52 L264.62 118.52 L264.62 115.06 L267.08 115.06 L267.08 111.59 L269.55 111.59 L269.55 97.74 L272.02 97.74 L272.02 104.67 L274.48 104.67 L274.48 108.13 L276.95 108.13 L276.95 125.45 L279.41 125.45 L279.41 108.13 L281.88 108.13 L281.88 97.74 L284.35 97.74 L284.35 94.28 L286.81 94.28 L286.81 108.13 L289.28 108.13 L289.28 125.45 L291.74 125.45 L291.74 111.59 L294.21 111.59 L294.21 104.67 L296.68 104.67 L296.68 97.74 L299.14 97.74 L299.14 111.59 L301.61 111.59 L301.61 125.45 L304.08 125.45 L304.08 118.52 L306.54 118.52 L306.54 111.59 L309.01 111.59 L309.01 97.74 L311.47 97.74 L311.47 111.59 L313.94 111.59 L313.94 115.06 L316.41 115.06 L316.41 121.98 L318.87 121.98 L318.87 111.59 L321.34 111.59 L321.34 97.74 L323.80 97.74 L323.80 101.20 L326.27 101.20 L326.27 108.13 L328.74 108.13 L328.74 118.52 L331.20 118.52 L331.20 104.67 L333.67 104.67 L333.67 94.28 L336.14 94.28 L336.14 90.81 L338.60 90.81 L338.60 108.13 L341.07 108.13 L341.07 125.45 L343.53 125.45 L343.53 115.06 L346.00 115.06" fill="none" stroke="#4aa9a0" stroke-width="1"/><line x1="14.0" y1="139.50" x2="378.0" y2="139.50" stroke="rgba(0,0,0,0.1)" stroke-width="1"/><text x="383" y="142.50" class="yl">0</text><line x1="14.0" y1="104.50" x2="378.0" y2="104.50" stroke="rgba(0,0,0,0.055)" stroke-width="1"/><text x="383" y="107.50" class="yl">10</text><line x1="14.0" y1="70.50" x2="378.0" y2="70.50" stroke="rgba(0,0,0,0.055)" stroke-width="1"/><text x="383" y="73.50" class="yl">20</text><line x1="14.0" y1="35.50" x2="378.0" y2="35.50" stroke="rgba(0,0,0,0.055)" stroke-width="1"/><text x="383" y="38.50" class="yl">30</text><line x1="49.5" y1="140.0" x2="49.5" y2="144.0" stroke="#dfe6f3" stroke-width="1"/><text x="49.5" y="148.9" class="xl" text-anchor="middle">6:00 AM</text><line x1="109.0" y1="140.0" x2="109.0" y2="144.0" stroke="#dfe6f3" stroke-width="1"/><text x="109.0" y="148.9" class="xl" text-anchor="middle">8:00 AM</text><line x1="168.3" y1="140.0" x2="168.3" y2="144.0" stroke="#dfe6f3" stroke-width="1"/><text x="168.3" y="148.9" class="xl" text-anchor="middle">10:00 AM</text><line x1="227.6" y1="140.0" x2="227.6" y2="144.0" stroke="#dfe6f3" stroke-width="1"/><text x="227.6" y="148.9" class="xl" text-anchor="middle">12:00 PM</text><line x1="286.8" y1="140.0" x2="286.8" y2="144.0" stroke="#dfe6f3" stroke-width="1"/><text x="286.8" y="148.9" class="xl" text-anchor="middle">2:00 PM</text><line x1="346.0" y1="140.0" x2="346.0" y2="144.0" stroke="#dfe6f3" stroke-width="1"/><text x="346.0" y="148.9" class="xl" text-anchor="middle">4:00 PM</text></svg><div class="fd"></div><div class="ft"><span class="fl" style="left:299.4px">Min</span><span class="fv" style="left:314.1px">4</span><span class="fl" style="left:325.8px">Max</span><span class="fv" style="left:342.2px">26</span><span class="fl" style="left:357.8px">Average</span><span class="fv" style="left:386.9px">8.758</span></div></div>
<div class="card" style="left:558px;top:359px"><div class="ct">Over Capacity Drops</div><div class="hd"></div><svg class="ch" width="414" height="190" viewBox="0 0 414 190"><path d="M18.00 139.30 L20.47 139.30 L20.47 139.30 L22.93 139.30 L22.93 139.30 L25.40 139.30 L25.40 139.30 L27.86 139.30 L27.86 139.30 L30.33 139.30 L30.33 139.30 L32.80 139.30 L32.80 139.30 L35.26 139.30 L35.26 139.30 L37.73 139.30 L37.73 139.30 L40.20 139.30 L40.20 139.30 L42.66 139.30 L42.66 139.30 L45.13 139.30 L45.13 139.30 L47.59 139.30 L47.59 139.30 L50.06 139.30 L50.06 139.30 L52.53 139.30 L52.53 139.30 L54.99 139.30 L54.99 139.30 L57.46 139.30 L57.46 139.30 L59.92 139.30 L59.92 139.30 L62.39 139.30 L62.39 139.30 L64.86 139.30 L64.86 139.30 L67.32 139.30 L67.32 139.30 L69.79 139.30 L69.79 139.30 L72.26 139.30 L72.26 139.30 L74.72 139.30 L74.72 139.30 L77.19 139.30 L77.19 139.30 L79.65 139.30 L79.65 139.30 L82.12 139.30 L82.12 139.30 L84.59 139.30 L84.59 139.30 L87.05 139.30 L87.05 139.30 L89.52 139.30 L89.52 139.30 L91.98 139.30 L91.98 139.30 L94.45 139.30 L94.45 139.30 L96.92 139.30 L96.92 139.30 L99.38 139.30 L99.38 139.30 L101.85 139.30 L101.85 139.30 L104.32 139.30 L104.32 139.30 L106.78 139.30 L106.78 139.30 L109.25 139.30 L109.25 139.30 L111.71 139.30 L111.71 139.30 L114.18 139.30 L114.18 139.30 L116.65 139.30 L116.65 139.30 L119.11 139.30 L119.11 139.30 L121.58 139.30 L121.58 139.30 L124.05 139.30 L124.05 139.30 L126.51 139.30 L126.51 139.30 L128.98 139.30 L128.98 139.30 L131.44 139.30 L131.44 139.30 L133.91 139.30 L133.91 139.30 L136.38 139.30 L136.38 139.30 L138.84 139.30 L138.84 139.30 L141.31 139.30 L141.31 139.30 L143.77 139.30 L143.77 139.30 L146.24 139.30 L146.24 139.30 L148.71 139.30 L148.71 139.30 L151.17 139.30 L151.17 139.30 L153.64 139.30 L153.64 139.30 L156.11 139.30 L156.11 139.30 L158.57 139.30 L158.57 139.30 L161.04 139.30 L161.04 139.30 L163.50 139.30 L163.50 139.30 L165.97 139.30 L165.97 139.30 L168.44 139.30 L168.44 139.30 L170.90 139.30 L170.90 139.30 L173.37 139.30 L173.37 139.30 L175.83 139.30 L175.83 139.30 L178.30 139.30 L178.30 139.30 L180.77 139.30 L180.77 139.30 L183.23 139.30 L183.23 139.30 L185.70 139.30 L185.70 139.30 L188.17 139.30 L188.17 139.30 L190.63 139.30 L190.63 139.30 L193.10 139.30 L193.10 139.30 L195.56 139.30 L195.56 139.30 L198.03 139.30 L198.03 139.30 L200.50 139.30 L200.50 139.30 L202.96 139.30 L202.96 139.30 L205.43 139.30 L205.43 139.30 L207.89 139.30 L207.89 139.30 L210.36 139.30 L210.36 139.30 L212.83 139.30 L212.83 139.30 L215.29 139.30 L215.29 139.30 L217.76 139.30 L217.76 139.30 L220.23 139.30 L220.23 139.30 L222.69 139.30 L222.69 139.30 L225.16 139.30 L225.16 139.30 L227.62 139.30 L227.62 139.30 L230.09 139.30 L230.09 139.30 L232.56 139.30 L232.56 139.30 L235.02 139.30 L235.02 139.30 L237.49 139.30 L237.49 139.30 L239.95 139.30 L239.95 139.30 L242.42 139.30 L242.42 139.30 L244.89 139.30 L244.89 139.30 L247.35 139.30 L247.35 139.30 L249.82 139.30 L249.82 139.30 L252.29 139.30 L252.29 139.30 L254.75 139.30 L254.75 139.30 L257.22 139.30 L257.22 139.30 L259.68 139.30 L259.68 139.30 L262.15 139.30 L262.15 139.30 L264.62 139.30 L264.62 139.30 L267.08 139.30 L267.08 139.30 L269.55 139.30 L269.55 139.30 L272.02 139.30 L272.02 139.30 L274.48 139.30 L274.48 139.30 L276.95 139.30 L276.95 139.30 L279.41 139.30 L279.41 139.30 L281.88 139.30 L281.88 139.30 L284.35 139.30 L284.35 139.30 L286.81 139.30 L286.81 139.30 L289.28 139.30 L289.28 139.30 L291.74 139.30 L291.74 139.30 L294.21 139.30 L294.21 139.30 L296.68 139.30 L296.68 139.30 L299.14 139.30 L299.14 139.30 L301.61 139.30 L301.61 139.30 L304.08 139.30 L304.08 139.30 L306.54 139.30 L306.54 139.30 L309.01 139.30 L309.01 139.30 L311.47 139.30 L311.47 139.30 L313.94 139.30 L313.94 139.30 L316.41 139.30 L316.41 139.30 L318.87 139.30 L318.87 139.30 L321.34 139.30 L321.34 139.30 L323.80 139.30 L323.80 139.30 L326.27 139.30 L326.27 139.30 L328.74 139.30 L328.74 96.70 L331.20 96.70 L331.20 103.45 L333.67 103.45 L333.67 135.66 L336.14 135.66 L336.14 139.30 L338.60 139.30 L338.60 139.30 L341.07 139.30 L341.07 139.30 L343.53 139.30 L343.53 56.34 L346.00 56.34 L346.00 139.30 L18.00 139.30 Z" fill="#a9addf" stroke="none"/><path d="M18.00 139.30 L20.47 139.30 L20.47 139.30 L22.93 139.30 L22.93 139.30 L25.40 139.30 L25.40 139.30 L27.86 139.30 L27.86 139.30 L30.33 139.30 L30.33 139.30 L32.80 139.30 L32.80 139.30 L35.26 139.30 L35.26 139.30 L37.73 139.30 L37.73 139.30 L40.20 139.30 L40.20 139.30 L42.66 139.30 L42.66 139.30 L45.13 139.30 L45.13 139.30 L47.59 139.30 L47.59 139.30 L50.06 139.30 L50.06 139.30 L52.53 139.30 L52.53 139.30 L54.99 139.30 L54.99 139.30 L57.46 139.30 L57.46 139.30 L59.92 139.30 L59.92 139.30 L62.39 139.30 L62.39 139.30 L64.86 139.30 L64.86 139.30 L67.32 139.30 L67.32 139.30 L69.79 139.30 L69.79 139.30 L72.26 139.30 L72.26 139.30 L74.72 139.30 L74.72 139.30 L77.19 139.30 L77.19 139.30 L79.65 139.30 L79.65 139.30 L82.12 139.30 L82.12 139.30 L84.59 139.30 L84.59 139.30 L87.05 139.30 L87.05 139.30 L89.52 139.30 L89.52 139.30 L91.98 139.30 L91.98 139.30 L94.45 139.30 L94.45 139.30 L96.92 139.30 L96.92 139.30 L99.38 139.30 L99.38 139.30 L101.85 139.30 L101.85 139.30 L104.32 139.30 L104.32 139.30 L106.78 139.30 L106.78 139.30 L109.25 139.30 L109.25 139.30 L111.71 139.30 L111.71 139.30 L114.18 139.30 L114.18 139.30 L116.65 139.30 L116.65 139.30 L119.11 139.30 L119.11 139.30 L121.58 139.30 L121.58 139.30 L124.05 139.30 L124.05 139.30 L126.51 139.30 L126.51 139.30 L128.98 139.30 L128.98 139.30 L131.44 139.30 L131.44 139.30 L133.91 139.30 L133.91 139.30 L136.38 139.30 L136.38 139.30 L138.84 139.30 L138.84 139.30 L141.31 139.30 L141.31 139.30 L143.77 139.30 L143.77 139.30 L146.24 139.30 L146.24 139.30 L148.71 139.30 L148.71 139.30 L151.17 139.30 L151.17 139.30 L153.64 139.30 L153.64 139.30 L156.11 139.30 L156.11 139.30 L158.57 139.30 L158.57 139.30 L161.04 139.30 L161.04 139.30 L163.50 139.30 L163.50 139.30 L165.97 139.30 L165.97 139.30 L168.44 139.30 L168.44 139.30 L170.90 139.30 L170.90 139.30 L173.37 139.30 L173.37 139.30 L175.83 139.30 L175.83 139.30 L178.30 139.30 L178.30 139.30 L180.77 139.30 L180.77 139.30 L183.23 139.30 L183.23 139.30 L185.70 139.30 L185.70 139.30 L188.17 139.30 L188.17 139.30 L190.63 139.30 L190.63 139.30 L193.10 139.30 L193.10 139.30 L195.56 139.30 L195.56 139.30 L198.03 139.30 L198.03 139.30 L200.50 139.30 L200.50 139.30 L202.96 139.30 L202.96 139.30 L205.43 139.30 L205.43 139.30 L207.89 139.30 L207.89 139.30 L210.36 139.30 L210.36 139.30 L212.83 139.30 L212.83 139.30 L215.29 139.30 L215.29 139.30 L217.76 139.30 L217.76 139.30 L220.23 139.30 L220.23 139.30 L222.69 139.30 L222.69 139.30 L225.16 139.30 L225.16 139.30 L227.62 139.30 L227.62 139.30 L230.09 139.30 L230.09 139.30 L232.56 139.30 L232.56 139.30 L235.02 139.30 L235.02 139.30 L237.49 139.30 L237.49 139.30 L239.95 139.30 L239.95 139.30 L242.42 139.30 L242.42 139.30 L244.89 139.30 L244.89 139.30 L247.35 139.30 L247.35 139.30 L249.82 139.30 L249.82 139.30 L252.29 139.30 L252.29 139.30 L254.75 139.30 L254.75 139.30 L257.22 139.30 L257.22 139.30 L259.68 139.30 L259.68 139.30 L262.15 139.30 L262.15 139.30 L264.62 139.30 L264.62 139.30 L267.08 139.30 L267.08 139.30 L269.55 139.30 L269.55 139.30 L272.02 139.30 L272.02 139.30 L274.48 139.30 L274.48 139.30 L276.95 139.30 L276.95 139.30 L279.41 139.30 L279.41 139.30 L281.88 139.30 L281.88 139.30 L284.35 139.30 L284.35 139.30 L286.81 139.30 L286.81 139.30 L289.28 139.30 L289.28 139.30 L291.74 139.30 L291.74 139.30 L294.21 139.30 L294.21 139.30 L296.68 139.30 L296.68 139.30 L299.14 139.30 L299.14 139.30 L301.61 139.30 L301.61 139.30 L304.08 139.30 L304.08 139.30 L306.54 139.30 L306.54 139.30 L309.01 139.30 L309.01 139.30 L311.47 139.30 L311.47 139.30 L313.94 139.30 L313.94 139.30 L316.41 139.30 L316.41 139.30 L318.87 139.30 L318.87 139.30 L321.34 139.30 L321.34 139.30 L323.80 139.30 L323.80 139.30 L326.27 139.30 L326.27 139.30 L328.74 139.30 L328.74 96.70 L331.20 96.70 L331.20 103.45 L333.67 103.45 L333.67 135.66 L336.14 135.66 L336.14 139.30 L338.60 139.30 L338.60 139.30 L341.07 139.30 L341.07 139.30 L343.53 139.30 L343.53 56.34 L346.00 56.34" fill="none" stroke="#8c92d6" stroke-width="1"/><line x1="14.0" y1="139.50" x2="378.0" y2="139.50" stroke="rgba(0,0,0,0.1)" stroke-width="1"/><text x="383" y="142.50" class="yl">0</text><line x1="14.0" y1="113.50" x2="378.0" y2="113.50" stroke="rgba(0,0,0,0.055)" stroke-width="1"/><text x="383" y="116.50" class="yl">500 K</text><line x1="14.0" y1="87.50" x2="378.0" y2="87.50" stroke="rgba(0,0,0,0.055)" stroke-width="1"/><text x="383" y="90.50" class="yl">1 M</text><line x1="14.0" y1="61.50" x2="378.0" y2="61.50" stroke="rgba(0,0,0,0.055)" stroke-width="1"/><text x="383" y="64.50" class="yl">1.5 M</text><line x1="14.0" y1="35.50" x2="378.0" y2="35.50" stroke="rgba(0,0,0,0.055)" stroke-width="1"/><text x="383" y="38.50" class="yl">2 M</text><line x1="49.5" y1="140.0" x2="49.5" y2="144.0" stroke="#dfe6f3" stroke-width="1"/><text x="49.5" y="148.9" class="xl" text-anchor="middle">6:00 AM</text><line x1="109.0" y1="140.0" x2="109.0" y2="144.0" stroke="#dfe6f3" stroke-width="1"/><text x="109.0" y="148.9" class="xl" text-anchor="middle">8:00 AM</text><line x1="168.3" y1="140.0" x2="168.3" y2="144.0" stroke="#dfe6f3" stroke-width="1"/><text x="168.3" y="148.9" class="xl" text-anchor="middle">10:00 AM</text><line x1="227.6" y1="140.0" x2="227.6" y2="144.0" stroke="#dfe6f3" stroke-width="1"/><text x="227.6" y="148.9" class="xl" text-anchor="middle">12:00 PM</text><line x1="286.8" y1="140.0" x2="286.8" y2="144.0" stroke="#dfe6f3" stroke-width="1"/><text x="286.8" y="148.9" class="xl" text-anchor="middle">2:00 PM</text><line x1="346.0" y1="140.0" x2="346.0" y2="144.0" stroke="#dfe6f3" stroke-width="1"/><text x="346.0" y="148.9" class="xl" text-anchor="middle">4:00 PM</text></svg><div class="fd"></div><div class="ft"><span class="fl" style="left:271.4px">Min</span><span class="fv" style="left:285.7px">0</span><span class="fl" style="left:298.1px">Max</span><span class="fv" style="left:314.0px">1.597 M</span><span class="fl" style="left:344.4px">Average</span><span class="fv" style="left:373.4px">798.365 K</span></div></div>
<div class="card" style="left:137px;top:556px"><div class="ct">Tunnel Count</div><div class="hd"></div><svg class="ch" width="414" height="190" viewBox="0 0 414 190"><path d="M18.00 56.18 L20.47 56.18 L20.47 56.18 L22.93 56.18 L22.93 56.18 L25.40 56.18 L25.40 56.18 L27.86 56.18 L27.86 56.18 L30.33 56.18 L30.33 56.18 L32.80 56.18 L32.80 56.18 L35.26 56.18 L35.26 56.18 L37.73 56.18 L37.73 56.18 L40.20 56.18 L40.20 56.18 L42.66 56.18 L42.66 56.18 L45.13 56.18 L45.13 56.18 L47.59 56.18 L47.59 56.18 L50.06 56.18 L50.06 56.18 L52.53 56.18 L52.53 56.18 L54.99 56.18 L54.99 56.18 L57.46 56.18 L57.46 56.18 L59.92 56.18 L59.92 56.18 L62.39 56.18 L62.39 56.18 L64.86 56.18 L64.86 56.18 L67.32 56.18 L67.32 56.18 L69.79 56.18 L69.79 56.18 L72.26 56.18 L72.26 56.18 L74.72 56.18 L74.72 56.18 L77.19 56.18 L77.19 56.18 L79.65 56.18 L79.65 56.18 L82.12 56.18 L82.12 56.18 L84.59 56.18 L84.59 56.18 L87.05 56.18 L87.05 56.18 L89.52 56.18 L89.52 56.18 L91.98 56.18 L91.98 56.18 L94.45 56.18 L94.45 56.18 L96.92 56.18 L96.92 56.18 L99.38 56.18 L99.38 56.18 L101.85 56.18 L101.85 56.18 L104.32 56.18 L104.32 56.18 L106.78 56.18 L106.78 56.18 L109.25 56.18 L109.25 56.18 L111.71 56.18 L111.71 56.18 L114.18 56.18 L114.18 56.18 L116.65 56.18 L116.65 56.18 L119.11 56.18 L119.11 56.18 L121.58 56.18 L121.58 56.18 L124.05 56.18 L124.05 56.18 L126.51 56.18 L126.51 56.18 L128.98 56.18 L128.98 56.18 L131.44 56.18 L131.44 56.18 L133.91 56.18 L133.91 56.18 L136.38 56.18 L136.38 56.18 L138.84 56.18 L138.84 56.18 L141.31 56.18 L141.31 56.18 L143.77 56.18 L143.77 56.18 L146.24 56.18 L146.24 56.18 L148.71 56.18 L148.71 56.18 L151.17 56.18 L151.17 56.18 L153.64 56.18 L153.64 56.18 L156.11 56.18 L156.11 56.18 L158.57 56.18 L158.57 56.18 L161.04 56.18 L161.04 56.18 L163.50 56.18 L163.50 56.18 L165.97 56.18 L165.97 56.18 L168.44 56.18 L168.44 56.18 L170.90 56.18 L170.90 56.18 L173.37 56.18 L173.37 56.18 L175.83 56.18 L175.83 56.18 L178.30 56.18 L178.30 56.18 L180.77 56.18 L180.77 56.18 L183.23 56.18 L183.23 56.18 L185.70 56.18 L185.70 56.18 L188.17 56.18 L188.17 56.18 L190.63 56.18 L190.63 56.18 L193.10 56.18 L193.10 56.18 L195.56 56.18 L195.56 56.18 L198.03 56.18 L198.03 56.18 L200.50 56.18 L200.50 56.18 L202.96 56.18 L202.96 56.18 L205.43 56.18 L205.43 56.18 L207.89 56.18 L207.89 56.18 L210.36 56.18 L210.36 56.18 L212.83 56.18 L212.83 56.18 L215.29 56.18 L215.29 56.18 L217.76 56.18 L217.76 56.18 L220.23 56.18 L220.23 56.18 L222.69 56.18 L222.69 56.18 L225.16 56.18 L225.16 56.18 L227.62 56.18 L227.62 56.18 L230.09 56.18 L230.09 56.18 L232.56 56.18 L232.56 56.18 L235.02 56.18 L235.02 56.18 L237.49 56.18 L237.49 56.18 L239.95 56.18 L239.95 56.18 L242.42 56.18 L242.42 56.18 L244.89 56.18 L244.89 56.18 L247.35 56.18 L247.35 56.18 L249.82 56.18 L249.82 56.18 L252.29 56.18 L252.29 56.18 L254.75 56.18 L254.75 56.18 L257.22 56.18 L257.22 56.18 L259.68 56.18 L259.68 56.18 L262.15 56.18 L262.15 56.18 L264.62 56.18 L264.62 56.18 L267.08 56.18 L267.08 56.18 L269.55 56.18 L269.55 56.18 L272.02 56.18 L272.02 56.18 L274.48 56.18 L274.48 56.18 L276.95 56.18 L276.95 56.18 L279.41 56.18 L279.41 56.18 L281.88 56.18 L281.88 56.18 L284.35 56.18 L284.35 56.18 L286.81 56.18 L286.81 56.18 L289.28 56.18 L289.28 56.18 L291.74 56.18 L291.74 56.18 L294.21 56.18 L294.21 56.18 L296.68 56.18 L296.68 56.18 L299.14 56.18 L299.14 56.18 L301.61 56.18 L301.61 56.18 L304.08 56.18 L304.08 56.18 L306.54 56.18 L306.54 56.18 L309.01 56.18 L309.01 56.18 L311.47 56.18 L311.47 56.18 L313.94 56.18 L313.94 56.18 L316.41 56.18 L316.41 56.18 L318.87 56.18 L318.87 56.18 L321.34 56.18 L321.34 56.18 L323.80 56.18 L323.80 56.18 L326.27 56.18 L326.27 56.18 L328.74 56.18 L328.74 56.18 L331.20 56.18 L331.20 56.18 L333.67 56.18 L333.67 56.18 L336.14 56.18 L336.14 56.18 L338.60 56.18 L338.60 56.18 L341.07 56.18 L341.07 56.18 L343.53 56.18 L343.53 56.18 L346.00 56.18 L346.00 139.30 L18.00 139.30 Z" fill="#b1d190" stroke="none"/><path d="M18.00 56.18 L20.47 56.18 L20.47 56.18 L22.93 56.18 L22.93 56.18 L25.40 56.18 L25.40 56.18 L27.86 56.18 L27.86 56.18 L30.33 56.18 L30.33 56.18 L32.80 56.18 L32.80 56.18 L35.26 56.18 L35.26 56.18 L37.73 56.18 L37.73 56.18 L40.20 56.18 L40.20 56.18 L42.66 56.18 L42.66 56.18 L45.13 56.18 L45.13 56.18 L47.59 56.18 L47.59 56.18 L50.06 56.18 L50.06 56.18 L52.53 56.18 L52.53 56.18 L54.99 56.18 L54.99 56.18 L57.46 56.18 L57.46 56.18 L59.92 56.18 L59.92 56.18 L62.39 56.18 L62.39 56.18 L64.86 56.18 L64.86 56.18 L67.32 56.18 L67.32 56.18 L69.79 56.18 L69.79 56.18 L72.26 56.18 L72.26 56.18 L74.72 56.18 L74.72 56.18 L77.19 56.18 L77.19 56.18 L79.65 56.18 L79.65 56.18 L82.12 56.18 L82.12 56.18 L84.59 56.18 L84.59 56.18 L87.05 56.18 L87.05 56.18 L89.52 56.18 L89.52 56.18 L91.98 56.18 L91.98 56.18 L94.45 56.18 L94.45 56.18 L96.92 56.18 L96.92 56.18 L99.38 56.18 L99.38 56.18 L101.85 56.18 L101.85 56.18 L104.32 56.18 L104.32 56.18 L106.78 56.18 L106.78 56.18 L109.25 56.18 L109.25 56.18 L111.71 56.18 L111.71 56.18 L114.18 56.18 L114.18 56.18 L116.65 56.18 L116.65 56.18 L119.11 56.18 L119.11 56.18 L121.58 56.18 L121.58 56.18 L124.05 56.18 L124.05 56.18 L126.51 56.18 L126.51 56.18 L128.98 56.18 L128.98 56.18 L131.44 56.18 L131.44 56.18 L133.91 56.18 L133.91 56.18 L136.38 56.18 L136.38 56.18 L138.84 56.18 L138.84 56.18 L141.31 56.18 L141.31 56.18 L143.77 56.18 L143.77 56.18 L146.24 56.18 L146.24 56.18 L148.71 56.18 L148.71 56.18 L151.17 56.18 L151.17 56.18 L153.64 56.18 L153.64 56.18 L156.11 56.18 L156.11 56.18 L158.57 56.18 L158.57 56.18 L161.04 56.18 L161.04 56.18 L163.50 56.18 L163.50 56.18 L165.97 56.18 L165.97 56.18 L168.44 56.18 L168.44 56.18 L170.90 56.18 L170.90 56.18 L173.37 56.18 L173.37 56.18 L175.83 56.18 L175.83 56.18 L178.30 56.18 L178.30 56.18 L180.77 56.18 L180.77 56.18 L183.23 56.18 L183.23 56.18 L185.70 56.18 L185.70 56.18 L188.17 56.18 L188.17 56.18 L190.63 56.18 L190.63 56.18 L193.10 56.18 L193.10 56.18 L195.56 56.18 L195.56 56.18 L198.03 56.18 L198.03 56.18 L200.50 56.18 L200.50 56.18 L202.96 56.18 L202.96 56.18 L205.43 56.18 L205.43 56.18 L207.89 56.18 L207.89 56.18 L210.36 56.18 L210.36 56.18 L212.83 56.18 L212.83 56.18 L215.29 56.18 L215.29 56.18 L217.76 56.18 L217.76 56.18 L220.23 56.18 L220.23 56.18 L222.69 56.18 L222.69 56.18 L225.16 56.18 L225.16 56.18 L227.62 56.18 L227.62 56.18 L230.09 56.18 L230.09 56.18 L232.56 56.18 L232.56 56.18 L235.02 56.18 L235.02 56.18 L237.49 56.18 L237.49 56.18 L239.95 56.18 L239.95 56.18 L242.42 56.18 L242.42 56.18 L244.89 56.18 L244.89 56.18 L247.35 56.18 L247.35 56.18 L249.82 56.18 L249.82 56.18 L252.29 56.18 L252.29 56.18 L254.75 56.18 L254.75 56.18 L257.22 56.18 L257.22 56.18 L259.68 56.18 L259.68 56.18 L262.15 56.18 L262.15 56.18 L264.62 56.18 L264.62 56.18 L267.08 56.18 L267.08 56.18 L269.55 56.18 L269.55 56.18 L272.02 56.18 L272.02 56.18 L274.48 56.18 L274.48 56.18 L276.95 56.18 L276.95 56.18 L279.41 56.18 L279.41 56.18 L281.88 56.18 L281.88 56.18 L284.35 56.18 L284.35 56.18 L286.81 56.18 L286.81 56.18 L289.28 56.18 L289.28 56.18 L291.74 56.18 L291.74 56.18 L294.21 56.18 L294.21 56.18 L296.68 56.18 L296.68 56.18 L299.14 56.18 L299.14 56.18 L301.61 56.18 L301.61 56.18 L304.08 56.18 L304.08 56.18 L306.54 56.18 L306.54 56.18 L309.01 56.18 L309.01 56.18 L311.47 56.18 L311.47 56.18 L313.94 56.18 L313.94 56.18 L316.41 56.18 L316.41 56.18 L318.87 56.18 L318.87 56.18 L321.34 56.18 L321.34 56.18 L323.80 56.18 L323.80 56.18 L326.27 56.18 L326.27 56.18 L328.74 56.18 L328.74 56.18 L331.20 56.18 L331.20 56.18 L333.67 56.18 L333.67 56.18 L336.14 56.18 L336.14 56.18 L338.60 56.18 L338.60 56.18 L341.07 56.18 L341.07 56.18 L343.53 56.18 L343.53 56.18 L346.00 56.18" fill="none" stroke="#92c164" stroke-width="1"/><line x1="18.0" y1="139.00" x2="346.0" y2="139.00" stroke="#e9cf7a" stroke-width="1"/><line x1="14.0" y1="139.50" x2="378.0" y2="139.50" stroke="rgba(0,0,0,0.1)" stroke-width="1"/><text x="383" y="142.50" class="yl">0</text><line x1="14.0" y1="118.50" x2="378.0" y2="118.50" stroke="rgba(0,0,0,0.055)" stroke-width="1"/><text x="383" y="121.50" class="yl">1</text><line x1="14.0" y1="97.50" x2="378.0" y2="97.50" stroke="rgba(0,0,0,0.055)" stroke-width="1"/><text x="383" y="100.50" class="yl">2</text><line x1="14.0" y1="76.50" x2="378.0" y2="76.50" stroke="rgba(0,0,0,0.055)" stroke-width="1"/><text x="383" y="79.50" class="yl">3</text><line x1="14.0" y1="56.50" x2="378.0" y2="56.50" stroke="rgba(0,0,0,0.055)" stroke-width="1"/><text x="383" y="59.50" class="yl">4</text><line x1="14.0" y1="35.50" x2="378.0" y2="35.50" stroke="rgba(0,0,0,0.055)" stroke-width="1"/><text x="383" y="38.50" class="yl">5</text><line x1="49.5" y1="140.0" x2="49.5" y2="144.0" stroke="#dfe6f3" stroke-width="1"/><text x="49.5" y="148.9" class="xl" text-anchor="middle">6:00 AM</text><line x1="109.0" y1="140.0" x2="109.0" y2="144.0" stroke="#dfe6f3" stroke-width="1"/><text x="109.0" y="148.9" class="xl" text-anchor="middle">8:00 AM</text><line x1="168.3" y1="140.0" x2="168.3" y2="144.0" stroke="#dfe6f3" stroke-width="1"/><text x="168.3" y="148.9" class="xl" text-anchor="middle">10:00 AM</text><line x1="227.6" y1="140.0" x2="227.6" y2="144.0" stroke="#dfe6f3" stroke-width="1"/><text x="227.6" y="148.9" class="xl" text-anchor="middle">12:00 PM</text><line x1="286.8" y1="140.0" x2="286.8" y2="144.0" stroke="#dfe6f3" stroke-width="1"/><text x="286.8" y="148.9" class="xl" text-anchor="middle">2:00 PM</text><line x1="346.0" y1="140.0" x2="346.0" y2="144.0" stroke="#dfe6f3" stroke-width="1"/><text x="346.0" y="148.9" class="xl" text-anchor="middle">4:00 PM</text></svg><div class="fd"></div><div class="ft"><i class="dot" style="left:88.6px;top:174.2px;background:#3c9a1e"></i><span class="fl" style="left:96.7px">IPv4</span><span class="fl" style="left:117.6px">Min</span><span class="fv" style="left:132.7px">4</span><span class="fl" style="left:144.6px">Max</span><span class="fv" style="left:161.1px">4</span><span class="fl" style="left:172.6px">Average</span><span class="fv" style="left:201.9px">4</span><i class="dot" style="left:285.1px;top:174.2px;background:#f2b51c"></i><span class="fl" style="left:292.9px">IPv6</span><span class="fl" style="left:314.5px">Min</span><span class="fv" style="left:329.0px">0</span><span class="fl" style="left:341.4px">Max</span><span class="fv" style="left:357.7px">0</span><span class="fl" style="left:369.9px">Average</span><span class="fv" style="left:398.9px">0</span></div></div>

</body></html>
